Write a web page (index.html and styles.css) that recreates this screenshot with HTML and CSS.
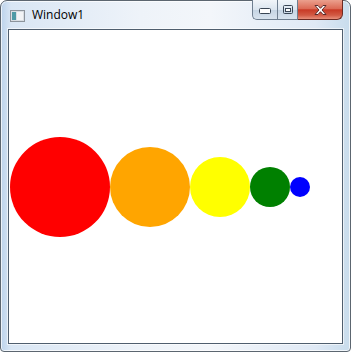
FILE: index.html
```html
<!DOCTYPE html>
<html>
<head>
<meta charset="utf-8">
<link rel="stylesheet" href="styles.css">
</head>
<body>
<div class="window">
  <div class="titlebar">
    <div class="app-icon">
      <svg width="15" height="12" viewBox="0 0 15 12">
        <rect x="0.5" y="0.5" width="14" height="11" fill="#d9dee3" stroke="#8c949c"/>
        <rect x="2" y="2" width="4" height="8" fill="#4e9aa6"/>
        <rect x="7" y="2" width="6" height="8" fill="#f2f4f6"/>
      </svg>
    </div>
    <div class="title">Window1</div>
    <div class="caption-buttons">
      <div class="cbtn min">
        <svg width="12" height="6" viewBox="0 0 12 6"><rect x="0.5" y="0.5" width="11" height="5" rx="1" fill="#fff" stroke="#3a4654"/></svg>
      </div>
      <div class="cbtn max">
        <svg width="10" height="9" viewBox="0 0 10 9"><rect x="0.5" y="0.5" width="9" height="8" rx="1" fill="none" stroke="#3a4654"/><rect x="2.5" y="3.5" width="5" height="3" fill="#fff" stroke="#3a4654"/></svg>
      </div>
      <div class="cbtn close">
        <svg width="15" height="12" viewBox="0 0 15 12"><path d="M2 1.5h3l2.5 2.8 2.5-2.8h3l-4 4.5 4 4.5h-3l-2.5-2.8-2.5 2.8h-3l4-4.5z" fill="#fff" stroke="#5a2a2a" stroke-width="1" stroke-linejoin="round"/></svg>
      </div>
    </div>
  </div>
  <div class="client">
    <div class="row">
      <div class="dot red"></div>
      <div class="dot orange"></div>
      <div class="dot yellow"></div>
      <div class="dot green"></div>
      <div class="dot blue"></div>
    </div>
  </div>
</div>
</body>
</html>
```
FILE: styles.css
```css
html, body {
  margin: 0;
  padding: 0;
  background: #ffffff;
}
body {
  width: 354px;
  height: 354px;
  overflow: hidden;
  font-family: "Open Sans", "Noto Sans", sans-serif;
}
.window {
  box-sizing: border-box;
  width: 351px;
  height: 352px;
  border: 1px solid #5c6670;
  border-radius: 7px 7px 4px 4px;
  background: linear-gradient(to right, #bcd3ec 0px, #d9e6f4 10px, #eef3f9 40%, #f3f6fa 60%, #dfe9f5 90%, #c8dcec 100%);
  display: flex;
  flex-direction: column;
  box-shadow: inset 0 0 0 1px rgba(255,255,255,0.7);
}
.titlebar {
  height: 28px;
  display: flex;
  align-items: flex-start;
  position: relative;
}
.app-icon {
  margin: 9px 0 0 9px;
  width: 15px;
  height: 12px;
  display: flex;
}
.title {
  margin: 6px 0 0 7px;
  font-size: 12px;
  line-height: 16px;
  color: #000;
}
.caption-buttons {
  position: absolute;
  top: -1px;
  right: 7px;
  display: flex;
  height: 20px;
}
.cbtn {
  box-sizing: border-box;
  height: 20px;
  display: flex;
  align-items: center;
  justify-content: center;
  border: 1px solid #6f7f90;
  border-top: none;
}
.min {
  width: 25px;
  border-radius: 0 0 0 5px;
  border-right: none;
  background: linear-gradient(#f1f5f9, #dbe5ef 50%, #c5d4e3 52%, #d8e3ee);
  padding-top: 3px;
}
.max {
  width: 21px;
  background: linear-gradient(#f1f5f9, #dbe5ef 50%, #c5d4e3 52%, #d8e3ee);
}
.close {
  width: 45px;
  border-radius: 0 0 6px 0;
  border-left: none;
  border-color: #6e2a22;
  background: linear-gradient(#eba08e, #dc6b56 45%, #c83a26 52%, #d25a44 80%, #e8907c);
}
.client {
  flex: 1;
  margin: 0 7px 7px 7px;
  border: 1px solid #4f5e6e;
  background: #fff;
  display: flex;
  align-items: center;
  padding-left: 1px;
  box-shadow: 0 0 0 1px rgba(255,255,255,0.6);
}
.row {
  display: flex;
  align-items: center;
}
.dot {
  border-radius: 50%;
  flex: none;
}
.red { width: 100px; height: 100px; background: #ff0000; }
.orange { width: 80px; height: 80px; background: #ffa500; }
.yellow { width: 60px; height: 60px; background: #ffff00; }
.green { width: 40px; height: 40px; background: #008000; }
.blue { width: 20px; height: 20px; background: #0000ff; }
```
